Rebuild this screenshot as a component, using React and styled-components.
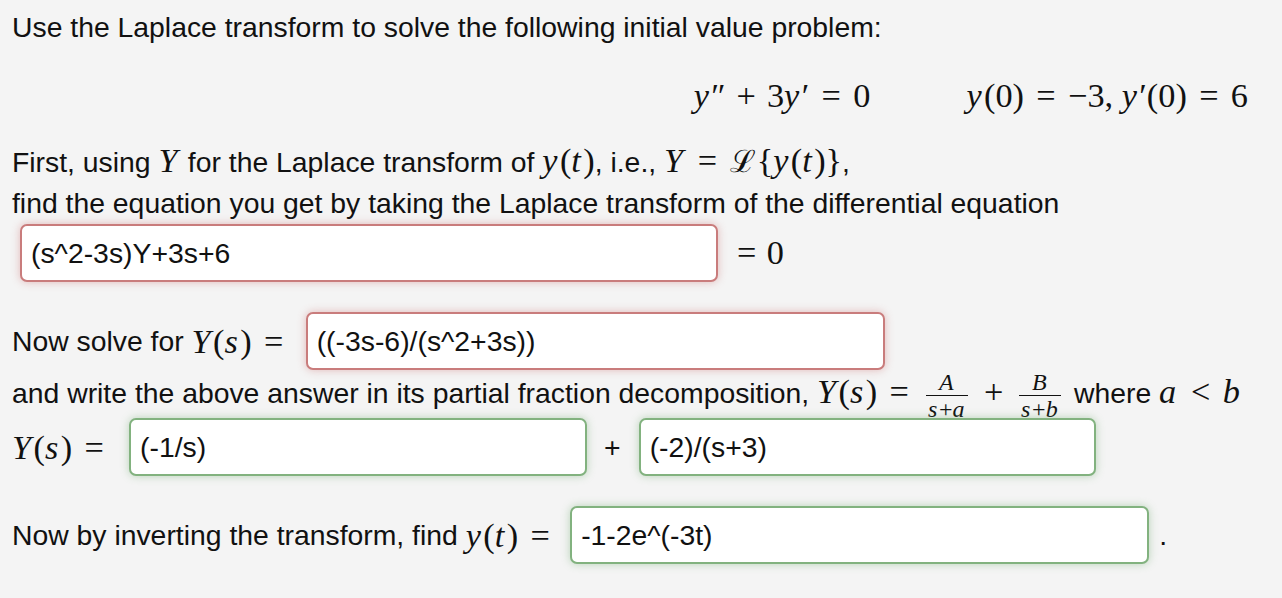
import React from 'react';
import styled, { createGlobalStyle } from 'styled-components';

const GlobalStyle = createGlobalStyle`
  html, body {
    margin: 0;
    padding: 0;
    background: #f4f4f4;
  }
  body {
    font-family: "Liberation Sans", Arial, sans-serif;
    color: #111;
  }
`;

const Page = styled.div`
  box-sizing: border-box;
  width: 1282px;
  height: 598px;
  padding: 7px 12px 0;
  overflow: hidden;
  font-size: 28.35px;
`;

const Para = styled.div`
  height: ${p => (p.lines || 1) * (p.lh || 40)}px;
  line-height: ${p => p.lh || 40}px;
  margin-top: ${p => p.mt || 0}px;
  white-space: nowrap;
`;

const DisplayEq = styled.div`
  display: flex;
  justify-content: flex-end;
  align-items: center;
  gap: 96px;
  height: 40px;
  margin-top: 28px;
  padding-right: 22px;
`;

const M = styled.span`
  font-family: "Liberation Serif", "DejaVu Serif", serif;
  font-size: 1.21em;
  line-height: 1;
  white-space: nowrap;
`;

const I = styled.i`
  font-style: italic;
  padding-right: 0.07em;
`;

const Cal = styled.span`
  font-family: "DejaVu Serif", serif;
  font-size: 0.9em;
  margin-right: 0.04em;
`;

const Rel = styled.span`
  margin: 0 ${p => p.r ?? 0.36}em 0 ${p => p.l ?? 0.36}em;
`;

const Bin = styled.span`
  margin: 0 0.32em;
`;

const Frac = styled.span`
  display: inline-flex;
  flex-direction: column;
  align-items: center;
  vertical-align: middle;
  font-size: 0.7em;
  line-height: 1;
  margin: 0 0.2em;
`;

const Num = styled.span`
  align-self: stretch;
  text-align: center;
  padding: 0 2px 1px;
  border-bottom: 1px solid #111;
`;

const Den = styled.span`
  padding: 1px 2px 0;
`;

const Row = styled.div`
  display: flex;
  align-items: center;
  height: 58px;
  margin-top: ${p => p.mt || 0}px;
  padding-left: ${p => p.pl || 0}px;
  white-space: nowrap;
`;

const Answer = styled.div`
  box-sizing: border-box;
  width: ${p => p.w}px;
  height: 58px;
  margin-left: ${p => p.ml || 0}px;
  padding: 0 9px;
  display: flex;
  align-items: center;
  background: #fff;
  border: 2px solid ${p => (p.ok ? '#82b27f' : '#c97c7c')};
  border-radius: 7px;
  box-shadow: 0 0 8px ${p => (p.ok ? 'rgba(110, 170, 110, 0.45)' : 'rgba(205, 110, 110, 0.45)')};
  font-size: 28.35px;
`;

const Plus = styled.span`
  margin: 0 18px 0 17px;
`;

const After = styled.span`
  margin-left: ${p => p.ml || 0}px;
`;

const App = () => {
  return (
    <Page>
      <GlobalStyle />
      <Para>Use the Laplace transform to solve the following initial value problem:</Para>

      <DisplayEq>
        <M>
          <I>y</I>″<Bin>+</Bin>3<I>y</I>′<Rel>=</Rel>0
        </M>
        <M>
          <I>y</I>(0)<Rel>=</Rel>−3,&nbsp;<I>y</I>′(0)<Rel>=</Rel>6
        </M>
      </DisplayEq>

      <Para mt={27} lh={41} lines={2}>
        First, using <M><I>Y</I></M> for the Laplace transform of <M><I>y</I>(<I>t</I>)</M>, i.e.,{' '}
        <M><I>Y</I><Rel>=</Rel><Cal>ℒ</Cal>{'{'}<I>y</I>(<I>t</I>){'}'}</M>,
        <br />
        find the equation you get by taking the Laplace transform of the differential equation
      </Para>

      <Row pl={8}>
        <Answer w={698}>(s^2-3s)Y+3s+6</Answer>
        <After ml={19}>
          <M><Rel l={0} r={0.3}>=</Rel>0</M>
        </After>
      </Row>

      <Row mt={30}>
        Now solve for&nbsp;<M><I>Y</I>(<I>s</I>)<Rel>=</Rel></M>
        <Answer w={579} ml={10}>((-3s-6)/(s^2+3s))</Answer>
      </Row>

      <Para>
        and write the above answer in its partial fraction decomposition,{' '}
        <M>
          <I>Y</I>(<I>s</I>)<Rel>=</Rel>
          <Frac>
            <Num><I>A</I></Num>
            <Den><I>s</I>+<I>a</I></Den>
          </Frac>
          <Bin>+</Bin>
          <Frac>
            <Num><I>B</I></Num>
            <Den><I>s</I>+<I>b</I></Den>
          </Frac>
        </M>{' '}
        where <M><I>a</I><Rel>&lt;</Rel><I>b</I></M>
      </Para>

      <Row mt={8}>
        <M><I>Y</I>(<I>s</I>)<Rel>=</Rel></M>
        <Answer w={458} ok ml={13}>(-1/s)</Answer>
        <Plus>+</Plus>
        <Answer w={457} ok>(-2)/(s+3)</Answer>
      </Row>

      <Row mt={30}>
        Now by inverting the transform, find&nbsp;<M><I>y</I>(<I>t</I>)<Rel>=</Rel></M>
        <Answer w={579} ok ml={8}>-1-2e^(-3t)</Answer>
        <After ml={10}>.</After>
      </Row>
    </Page>
  );
};

export default App;
